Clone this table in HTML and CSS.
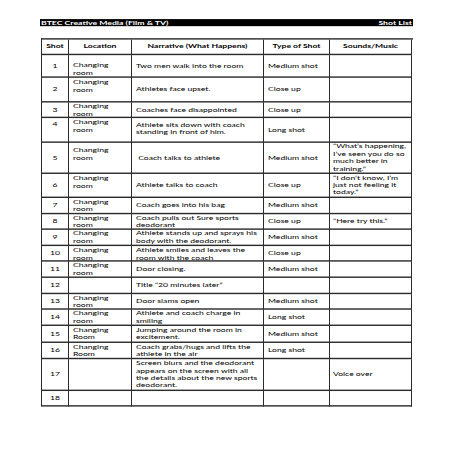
FILE: index.html
```html
<!DOCTYPE html>
<html lang="en">
<head>
<meta charset="utf-8">
<title>Shot List</title>
<link rel="stylesheet" href="styles.css">
</head>
<body>
<div class="frame">
<div class="page">
  <div class="bar"><span>BTEC Creative Media (Film &amp; TV)</span><span>Shot List</span></div>
  <div class="sheet">
    <div class="c h">Shot</div>
    <div class="c h">Location</div>
    <div class="c h">Narrative (What Happens)</div>
    <div class="c h">Type of Shot</div>
    <div class="c h">Sounds/Music</div>

    <div class="c n">1</div>
    <div class="c top pt-r1"><div>Changing<br>room</div></div>
    <div class="c"><div>Two men walk into the room</div></div>
    <div class="c"><div>Medium shot</div></div>
    <div class="c"></div>

    <div class="c n">2</div>
    <div class="c top pt-1"><div>Changing<br>room</div></div>
    <div class="c"><div>Athletes face upset.</div></div>
    <div class="c"><div>Close up</div></div>
    <div class="c"></div>

    <div class="c n">3</div>
    <div class="c top"><div>Changing<br>room</div></div>
    <div class="c"><div>Coaches face disappointed</div></div>
    <div class="c"><div>Close up</div></div>
    <div class="c"></div>

    <div class="c n top pt-3"><div>4</div></div>
    <div class="c top"><div>Changing<br>room</div></div>
    <div class="c top pt-4"><div>Athlete sits down with coach<br>standing in front of him.</div></div>
    <div class="c"><div>Long shot</div></div>
    <div class="c"></div>

    <div class="c n">5</div>
    <div class="c top pt-5"><div>Changing<br>room</div></div>
    <div class="c"><div>&nbsp;Coach talks to athlete</div></div>
    <div class="c"><div>Medium shot</div></div>
    <div class="c snd"><div>“What’s happening,<br>I’ve seen you do so<br>much better in<br>training.”</div></div>

    <div class="c n">6</div>
    <div class="c top pt-1"><div>Changing<br>room</div></div>
    <div class="c"><div>Athlete talks to coach</div></div>
    <div class="c"><div>Close up</div></div>
    <div class="c snd"><div>“I don’t know, I’m<br>just not feeling it<br>today.”</div></div>

    <div class="c n">7</div>
    <div class="c top"><div>Changing<br>room</div></div>
    <div class="c"><div>Coach goes into his bag</div></div>
    <div class="c"><div>Medium shot</div></div>
    <div class="c"></div>

    <div class="c n">8</div>
    <div class="c top"><div>Changing<br>room</div></div>
    <div class="c top"><div>Coach pulls out Sure sports<br>deodorant</div></div>
    <div class="c"><div>Close up</div></div>
    <div class="c snd"><div>“Here try this.”</div></div>

    <div class="c n">9</div>
    <div class="c top"><div>Changing<br>room</div></div>
    <div class="c top"><div>Athlete stands up and sprays his<br>body with the deodorant.</div></div>
    <div class="c"><div>Medium shot</div></div>
    <div class="c"></div>

    <div class="c n">10</div>
    <div class="c top"><div>Changing<br>room</div></div>
    <div class="c top"><div>Athlete smiles and leaves the<br>room with the coach</div></div>
    <div class="c"><div>Close up</div></div>
    <div class="c"></div>

    <div class="c n">11</div>
    <div class="c top"><div>Changing<br>room</div></div>
    <div class="c"><div>Door closing.</div></div>
    <div class="c"><div>Medium shot</div></div>
    <div class="c"></div>

    <div class="c n">12</div>
    <div class="c"></div>
    <div class="c"><div>Title “20 minutes later”</div></div>
    <div class="c"></div>
    <div class="c"></div>

    <div class="c n">13</div>
    <div class="c top"><div>Changing<br>room</div></div>
    <div class="c"><div>Door slams open</div></div>
    <div class="c"><div>Medium shot</div></div>
    <div class="c"></div>

    <div class="c n">14</div>
    <div class="c top"><div>Changing<br>room</div></div>
    <div class="c top"><div>Athlete and coach charge in<br>smiling</div></div>
    <div class="c"><div>Long shot</div></div>
    <div class="c"></div>

    <div class="c n">15</div>
    <div class="c top"><div>Changing<br>Room</div></div>
    <div class="c top"><div>Jumping around the room in<br>excitement.</div></div>
    <div class="c"><div>Medium shot</div></div>
    <div class="c"></div>

    <div class="c n">16</div>
    <div class="c top"><div>Changing<br>Room</div></div>
    <div class="c top"><div>Coach grabs/hugs and lifts the<br>athlete in the air</div></div>
    <div class="c"><div>Long shot</div></div>
    <div class="c"></div>

    <div class="c n">17</div>
    <div class="c"></div>
    <div class="c"><div>Screen blurs and the deodorant<br>appears on the screen with all<br>the details about the new sports<br>deodorant.</div></div>
    <div class="c"></div>
    <div class="c snd"><div>Voice over</div></div>

    <div class="c n">18</div>
    <div class="c"></div>
    <div class="c"></div>
    <div class="c"></div>
    <div class="c"></div>
  </div>
</div>
</div>
</body>
</html>
```

FILE: styles.css
```css
html, body {
  margin: 0;
  padding: 0;
  background: #ffffff;
  overflow: hidden;
}

.frame {
  width: 453px;
  height: 453px;
  overflow: hidden;
}

.page {
  width: 453px;
  height: 640.6px;
  box-sizing: border-box;
  padding-top: 26.87px;
  transform: scaleY(0.70711);
  transform-origin: 0 0;
  font-family: Lato, "Liberation Sans", sans-serif;
  color: #000000;
}

.bar {
  margin-left: 40px;
  width: 373px;
  height: 9.9px;
  box-sizing: border-box;
  padding: 0 1px;
  background: #000000;
  color: #ffffff;
  display: flex;
  justify-content: space-between;
  align-items: center;
  font-weight: 700;
  font-size: 8.7px;
  line-height: 9.9px;
  white-space: nowrap;
}

.sheet {
  margin: 16.97px 0 0 41px;
  width: 371px;
  display: grid;
  grid-template-columns: 27px 63px 132px 66px 82px;
  grid-template-rows: 22.04px 32.53px 34.65px 21.92px 35.36px 43.84px 33.94px
    22.63px 22.63px 22.63px 22.63px 22.63px 22.63px 22.63px 22.63px
    24.04px 22.63px 45.25px 22.63px;
  border-left: 1px solid #2b2b2b;
  border-top: 2px solid #2b2b2b;
  font-size: 8.6px;
  line-height: 10.7px;
}

.c {
  box-sizing: border-box;
  border-right: 1px solid #2b2b2b;
  border-bottom: 2px solid #2b2b2b;
  display: flex;
  flex-direction: column;
  justify-content: center;
  padding-left: 4px;
  white-space: nowrap;
  overflow: hidden;
}

.h {
  font-weight: 700;
  align-items: center;
  padding-left: 0;
}

.n {
  align-items: center;
  padding-left: 0;
}

.snd {
  padding-left: 3px;
}

.top {
  justify-content: flex-start;
}

.pt-1 { padding-top: 1px; }
.pt-3 { padding-top: 2.8px; }
.pt-4 { padding-top: 3.9px; }
.pt-5 { padding-top: 5px; }
.pt-r1 { padding-top: 9.5px; }
```
